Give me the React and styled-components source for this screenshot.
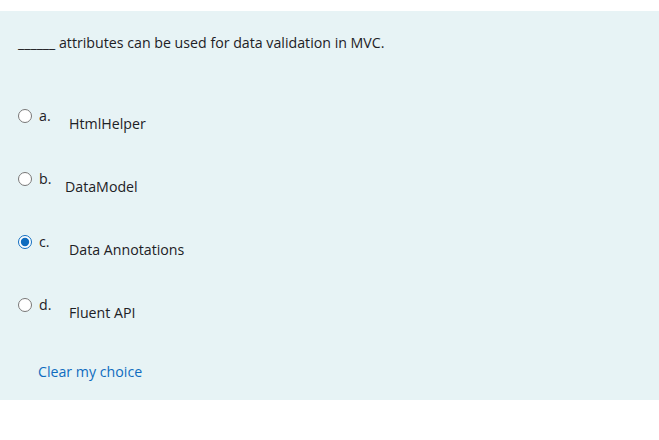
import React, { useState } from "react";
import styled, { createGlobalStyle } from "styled-components";

const Global = createGlobalStyle`
  html, body { margin: 0; padding: 0; background: #fff; }
  body { font-family: "Open Sans", "Noto Sans", sans-serif; color: #1d2125; }
`;

const Panel = styled.div`
  margin-top: 11px;
  height: 389px;
  box-sizing: border-box;
  background: #e7f3f5;
  padding: 22px 0 0 18px;
`;

const Question = styled.div`
  font-size: 14.2px;
  line-height: 20px;
  margin-bottom: 54px;
`;

const Options = styled.div`
  display: flex;
  flex-direction: column;
  gap: 43px;
`;

const Row = styled.label`
  display: flex;
  align-items: flex-start;
  height: 20px;
  cursor: pointer;
`;

const Radio = styled.input`
  width: 14px;
  height: 14px;
  margin: 2px 7px 0 0;
  accent-color: #0f6cbf;
`;

const Letter = styled.span`
  font-size: 14.2px;
  line-height: 16px;
  padding-top: 1px;
  width: ${(p) => p.$w}px;
  flex: none;
`;

const Answer = styled.span`
  font-size: 14.2px;
  line-height: 20px;
  margin-top: 7px;
`;

const Clear = styled.a`
  display: inline-block;
  margin: 46px 0 0 20px;
  font-size: 14.2px;
  color: #0f6cbf;
  text-decoration: none;
`;

const options = [
  { l: "a.", t: "HtmlHelper", w: 30 },
  { l: "b.", t: "DataModel", w: 26 },
  { l: "c.", t: "Data Annotations", w: 30 },
  { l: "d.", t: "Fluent API", w: 30 },
];

export default function App() {
  const [sel, setSel] = useState(2);
  return (
    <>
      <Global />
      <Panel>
        <Question>______ attributes can be used for data validation in MVC.</Question>
        <Options>
          {options.map((o, i) => (
            <Row key={o.l}>
              <Radio type="radio" name="q" checked={sel === i} onChange={() => setSel(i)} />
              <Letter $w={o.w}>{o.l}</Letter>
              <Answer>{o.t}</Answer>
            </Row>
          ))}
        </Options>
        <Clear href="#" onClick={(e) => { e.preventDefault(); setSel(-1); }}>Clear my choice</Clear>
      </Panel>
    </>
  );
}
